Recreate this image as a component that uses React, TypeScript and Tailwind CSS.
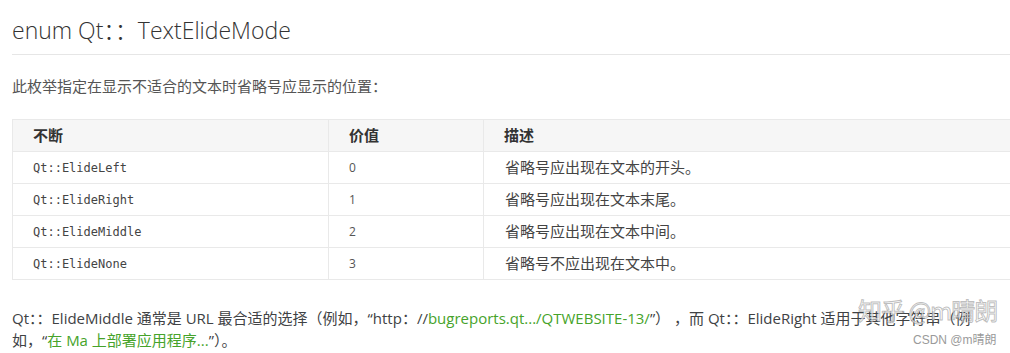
import React from 'react';

interface Row {
  name: string;
  value: string;
  desc: string;
}

const rows: Row[] = [
  { name: 'Qt::ElideLeft', value: '0', desc: '省略号应出现在文本的开头。' },
  { name: 'Qt::ElideRight', value: '1', desc: '省略号应出现在文本末尾。' },
  { name: 'Qt::ElideMiddle', value: '2', desc: '省略号应出现在文本中间。' },
  { name: 'Qt::ElideNone', value: '3', desc: '省略号不应出现在文本中。' },
];

const sans = "font-['Open_Sans','Noto_Sans_CJK_SC',sans-serif]";

const App: React.FC = () => {
  return (
    <div className={`relative w-[1010px] h-[353px] overflow-hidden bg-white text-[#404244] ${sans}`}>
      <div className="pl-[12px]">
        {/* Title */}
        <h1 className="pt-[14px] h-[55px] text-[23px] font-light text-[#333] leading-[32px] border-b border-[#e6e6e6]">
          enum Qt：：TextElideMode
        </h1>

        <p className="mt-[20px] text-[15px] leading-[22px] text-[#555]">
          此枚举指定在显示不适合的文本时省略号应显示的位置：
        </p>

        {/* Table */}
        <table className="mt-[22px] w-[1010px] border-collapse text-left">
          <thead>
            <tr className="h-[32px] bg-[#f6f6f6]">
              <th className="w-[316px] pl-[20px] border border-[#e9e9e9] text-[15px] font-bold text-[#333]">不断</th>
              <th className="w-[155px] pl-[20px] border border-[#e9e9e9] text-[15px] font-bold text-[#333]">价值</th>
              <th className="pl-[20px] border border-[#e9e9e9] text-[15px] font-bold text-[#333]">描述</th>
            </tr>
          </thead>
          <tbody>
            {rows.map((r) => (
              <tr key={r.name} className="h-[32px]">
                <td className="pl-[20px] border border-[#e9e9e9] font-['DejaVu_Sans_Mono',monospace] text-[12px] text-[#444]">
                  {r.name}
                </td>
                <td className="pl-[20px] border border-[#e9e9e9] text-[12px] text-[#555]">{r.value}</td>
                <td className="pl-[21px] border border-[#e9e9e9] text-[15px] text-[#444]">{r.desc}</td>
              </tr>
            ))}
          </tbody>
        </table>

        {/* Footnote */}
        <p className="mt-[27px] text-[15px] leading-[22px] text-[#404244] whitespace-nowrap">
          Qt：：ElideMiddle 通常是 URL 最合适的选择（例如，“http：//
          <span className="text-[#46a32a]">bugreports.qt.../QTWEBSITE-13/</span>”） ，而 Qt：：ElideRight 适用于其他字符串（例
          <br />
          如，“<span className="text-[#46a32a]">在 Ma 上部署应用程序...</span>”）。
        </p>
      </div>

      {/* Watermarks */}
      <div className="absolute left-[858px] top-[295px] whitespace-nowrap tracking-[-1px] text-[24px] leading-[30px] text-white/70 [-webkit-text-stroke:1px_rgba(110,110,110,0.45)] font-['Noto_Sans_CJK_SC',sans-serif]">
        知乎 @m晴朗
      </div>
      <div className="absolute left-[913px] top-[332px] whitespace-nowrap text-[12px] leading-[16px] text-[#9a9a9a] font-['Liberation_Sans','Noto_Sans_CJK_SC',sans-serif]">
        CSDN @m晴朗
      </div>
    </div>
  );
};

export default App;
